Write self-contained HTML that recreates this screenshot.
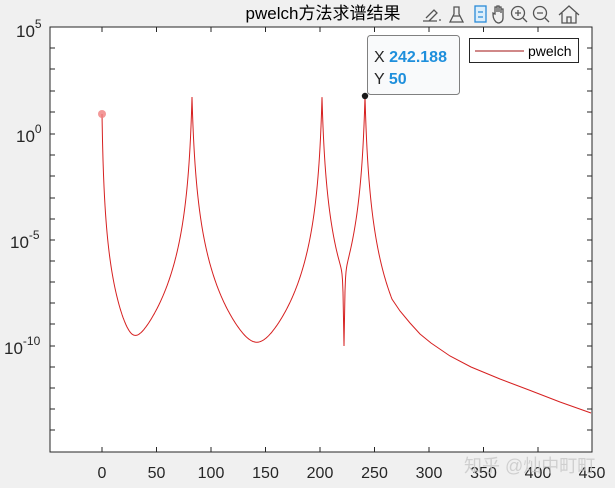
<!DOCTYPE html>
<html><head><meta charset="utf-8"><style>
body{margin:0;background:#f0f0f0;width:615px;height:488px;overflow:hidden;font-family:"Liberation Sans","Noto Sans CJK SC",sans-serif}
</style></head><body>
<svg width="615" height="488" xmlns="http://www.w3.org/2000/svg" style="position:absolute;left:0;top:0">
<rect x="50" y="27" width="542" height="425" fill="#fff" stroke="#262626" stroke-width="1"/>
<g stroke="#262626" stroke-width="1">
<path d="M102 452v-5M156.5 452v-5M211 452v-5M265.5 452v-5M320 452v-5M374.5 452v-5M429 452v-5M483.5 452v-5M538 452v-5"/>
<path d="M102 27v5M156.5 27v5M211 27v5M265.5 27v5M320 27v5M374.5 27v5M429 27v5M483.5 27v5M538 27v5"/>
<path d="M50 48h5M50 69h5M50 91h5M50 112h5M50 134h5M50 155h5M50 176h5M50 198h5M50 219h5M50 240h5M50 261h5M50 282h5M50 303h5M50 324h5M50 346h5M50 367h5M50 388h5M50 409h5M50 430h5"/>
<path d="M592 48h-5M592 69h-5M592 91h-5M592 112h-5M592 134h-5M592 155h-5M592 176h-5M592 198h-5M592 219h-5M592 240h-5M592 261h-5M592 282h-5M592 303h-5M592 324h-5M592 346h-5M592 367h-5M592 388h-5M592 409h-5M592 430h-5"/>
</g>
<polyline id="cv" fill="none" stroke="#d62020" stroke-width="1" points="102,114 103,160 104,200 106,250 110,296 116,318 122,327 129,331 136,328 145,318 153,308 161,300 170,272 178,232 184,182 188,140 190,112 192,97 194,112 196,140 199,165 204,192 210,232 216,266 222,300 235,326 248,342 254,347 262,340 275,322 290,300 300,266 308,220 314,175 318,135 320,110 322,97 324,110 327,140 331,180 336,220 340,250 342,275 343.5,310 344,343 344.5,310 346,275 349,245 354,210 358,175 361,140 363,112 365,96 367,112 370,150 375,195 382,250 392,300 410,325 431,343 471,367 529,390 591,413"/>
<circle cx="102" cy="114" r="4" fill="#f08080" opacity="0.8"/>
<circle cx="365" cy="96" r="3.2" fill="#1a1a1a"/>
<rect x="367.5" y="35.5" width="92" height="59" rx="3" fill="#f9fafb" stroke="#808080"/>
<text x="374" y="62" font-size="16" fill="#262626">X <tspan fill="#1e8fdc" font-weight="bold">242.188</tspan></text>
<text x="374" y="84" font-size="16" fill="#262626">Y <tspan fill="#1e8fdc" font-weight="bold">50</tspan></text>
<rect x="469.5" y="38.5" width="109" height="24" fill="#fff" stroke="#262626"/>
<line x1="475" y1="51" x2="524" y2="51" stroke="#a01010"/>
<text x="528" y="56" font-size="14" fill="#000">pwelch</text>
<text x="323" y="19" font-size="17" fill="#000" text-anchor="middle">pwelch方法求谱结果</text>
<g font-size="17" fill="#262626">
<text x="16" y="37">10<tspan font-size="12" dy="-9">5</tspan></text>
<text x="16" y="142">10<tspan font-size="12" dy="-9">0</tspan></text>
<text x="10" y="248">10<tspan font-size="12" dy="-9">-5</tspan></text>
<text x="4" y="354">10<tspan font-size="12" dy="-9">-10</tspan></text>
</g>
<g font-size="16" fill="#262626" text-anchor="middle">
<text x="102" y="478">0</text><text x="156.5" y="478">50</text><text x="211" y="478">100</text><text x="265.5" y="478">150</text><text x="320" y="478">200</text><text x="374.5" y="478">250</text><text x="429" y="478">300</text><text x="483.5" y="478">350</text><text x="538" y="478">400</text><text x="592" y="478">450</text>
</g>
<text x="464" y="472" font-size="18" fill="#c8c8c8" opacity="0.8">知乎 @灿中町町</text>
<g fill="none" stroke="#555" stroke-width="1.3">
<path d="M423 21h14M426 18l8-8 3 3-8 8M439 20l2 0"/>
<path d="M450 22h13l-4-8v-7h-5v7zM453 16h7"/>
<rect x="475" y="6" width="11" height="16" stroke="#2a8ad8" fill="#dbeefb"/><path d="M478 12h5M478 17h5" stroke="#2a8ad8"/>
<path d="M496 22c-3-3-3-6-3-9l2 1v-7h2v5 -6h2v6-5h2v6-4h2v9c0 3-2 5-5 5z"/>
<circle cx="518" cy="13" r="6.5"/><path d="M523 18l4 4M515 13h6M518 10v6"/>
<circle cx="540" cy="13" r="6.5"/><path d="M545 18l4 4M537 13h6"/>
<path d="M559 15l10-9 10 9M562 13v10h14v-10M567 23v-6h4v6"/>
</g>
</svg>
<script>
(function(){
var s=30;function comb(a){var t=0;for(var i=0;i<a.length;i++)t+=Math.pow(10,-a[i]/s);return -s*Math.log10(t);}
function pk(x,xp,yp,A,w){return yp+A*Math.log10(1+Math.abs(x-xp)/w);}
var pts=[];
for(var x=102;x<=392;x+=0.5){
 var t=[pk(x,102,114,152,1),pk(x,192,97,167,2),pk(x,322,97,167,2)];
 t.push(x<365?pk(x,365,96,167,2):pk(x,365,96,175,2));
 var y=comb(t);
 y+=80/(1+Math.pow((x-344)/0.7,2));
 if(y>452)y=452;
 pts.push(x.toFixed(1)+','+y.toFixed(1));
}
pts.push('400,311','410,323','420,334','431,343','450,356','471,367','500,379','529,390','560,402','591,413');
document.getElementById('cv').setAttribute('points',pts.join(' '));
})();
</script>
</body></html>
